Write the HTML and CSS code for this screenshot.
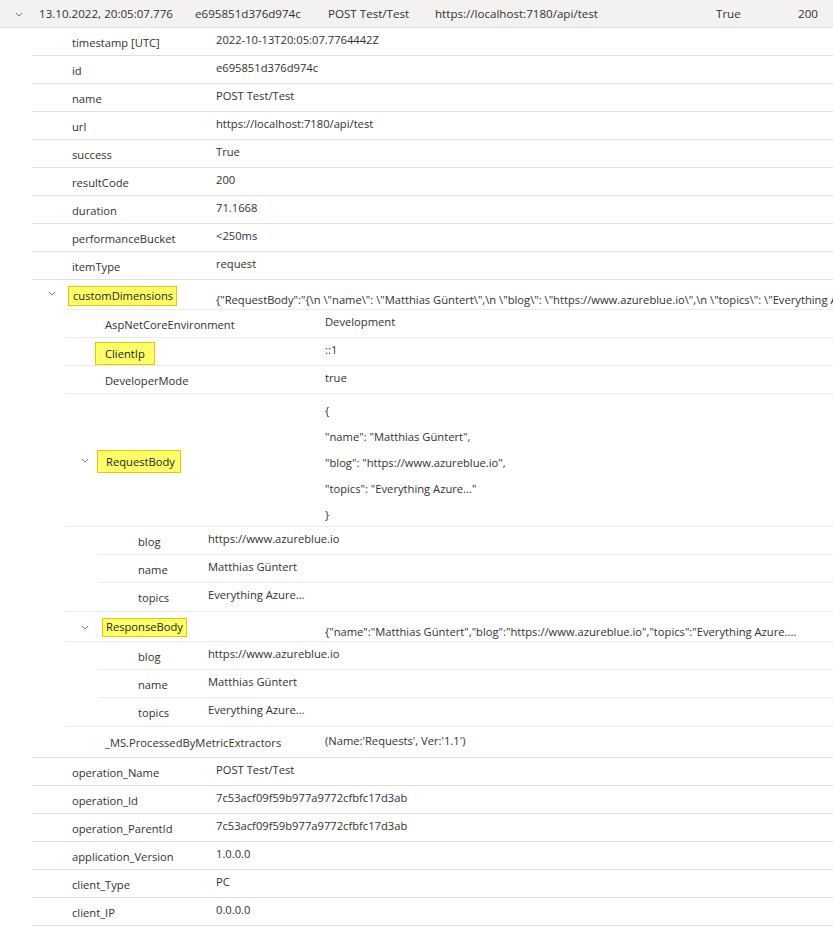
FILE: index.html
```html
<!DOCTYPE html>
<html lang="en">
<head>
<meta charset="utf-8">
<title>Request details</title>
<link rel="stylesheet" href="styles.css">
</head>
<body>
<div class="page">
  <div class="head">
    <div class="head-chev"><svg class="chev" viewBox="0 0 10 6"><path d="M1 1 L5 5 L9 1"/></svg></div>
    <div class="hc hc1">13.10.2022, 20:05:07.776</div>
    <div class="hc hc2">e695851d376d974c</div>
    <div class="hc hc3">POST Test/Test</div>
    <div class="hc hc4">https://localhost:7180/api/test</div>
    <div class="hc hc5">True</div>
    <div class="hc hc6">200</div>
  </div>

  <div class="l1">
    <div class="row"><div class="key">timestamp [UTC]</div><div class="val">2022-10-13T20:05:07.7764442Z</div></div>
    <div class="row"><div class="key">id</div><div class="val">e695851d376d974c</div></div>
    <div class="row"><div class="key">name</div><div class="val">POST Test/Test</div></div>
    <div class="row"><div class="key">url</div><div class="val">https://localhost:7180/api/test</div></div>
    <div class="row"><div class="key">success</div><div class="val">True</div></div>
    <div class="row"><div class="key">resultCode</div><div class="val">200</div></div>
    <div class="row"><div class="key">duration</div><div class="val">71.1668</div></div>
    <div class="row"><div class="key">performanceBucket</div><div class="val">&lt;250ms</div></div>
    <div class="row"><div class="key">itemType</div><div class="val">request</div></div>

    <div class="group">
      <div class="row exp exp-l1">
        <div class="key xkey">
          <span class="xchev"><svg class="chev" viewBox="0 0 10 6"><path d="M1 1 L5 5 L9 1"/></svg></span>
          <span class="hl hl-cd">customDimensions</span>
        </div>
        <div class="val xval clip">{"RequestBody":"{\n \"name\": \"Matthias Güntert\",\n \"blog\": \"https://www.azureblue.io\",\n \"topics\": \"Everything Azure...\"\n}","ResponseBody":"{\"name\":\"Matthias Güntert\"}"}</div>
      </div>

      <div class="l2">
        <div class="row"><div class="key">AspNetCoreEnvironment</div><div class="val">Development</div></div>
        <div class="row"><div class="key"><span class="hl hl-ip">ClientIp</span></div><div class="val">::1</div></div>
        <div class="row"><div class="key">DeveloperMode</div><div class="val">true</div></div>

        <div class="group">
          <div class="row exp req">
            <div class="key xkey xkey-mid">
              <span class="xchev"><svg class="chev" viewBox="0 0 10 6"><path d="M1 1 L5 5 L9 1"/></svg></span>
              <span class="hl hl-req">RequestBody</span>
            </div>
            <div class="val lines">
              <div>{</div>
              <div>"name": "Matthias Güntert",</div>
              <div>"blog": "https://www.azureblue.io",</div>
              <div>"topics": "Everything Azure..."</div>
              <div>}</div>
            </div>
          </div>
          <div class="l3">
            <div class="row"><div class="key">blog</div><div class="val">https://www.azureblue.io</div></div>
            <div class="row"><div class="key">name</div><div class="val">Matthias Güntert</div></div>
            <div class="row"><div class="key">topics</div><div class="val">Everything Azure...</div></div>
          </div>
        </div>

        <div class="group">
          <div class="row exp res">
            <div class="key xkey">
              <span class="xchev"><svg class="chev" viewBox="0 0 10 6"><path d="M1 1 L5 5 L9 1"/></svg></span>
              <span class="hl hl-res">ResponseBody</span>
            </div>
            <div class="val xval">{"name":"Matthias Güntert","blog":"https://www.azureblue.io","topics":"Everything Azure....</div>
          </div>
          <div class="l3">
            <div class="row"><div class="key">blog</div><div class="val">https://www.azureblue.io</div></div>
            <div class="row"><div class="key">name</div><div class="val">Matthias Güntert</div></div>
            <div class="row"><div class="key">topics</div><div class="val">Everything Azure...</div></div>
          </div>
        </div>

        <div class="row ms"><div class="key">_MS.ProcessedByMetricExtractors</div><div class="val">(Name:'Requests', Ver:'1.1')</div></div>
      </div>
    </div>

    <div class="row"><div class="key">operation_Name</div><div class="val">POST Test/Test</div></div>
    <div class="row"><div class="key">operation_Id</div><div class="val">7c53acf09f59b977a9772cfbfc17d3ab</div></div>
    <div class="row"><div class="key">operation_ParentId</div><div class="val">7c53acf09f59b977a9772cfbfc17d3ab</div></div>
    <div class="row"><div class="key">application_Version</div><div class="val">1.0.0.0</div></div>
    <div class="row"><div class="key">client_Type</div><div class="val">PC</div></div>
    <div class="row"><div class="key">client_IP</div><div class="val">0.0.0.0</div></div>
  </div>
</div>
</body>
</html>
```

FILE: styles.css
```css
html, body {
  margin: 0;
  padding: 0;
  background: #ffffff;
}
body {
  font-family: "Open Sans", "Noto Sans", sans-serif;
  font-size: 11.2px;
  line-height: 16px;
  color: #323130;
  overflow: hidden;
}
.page {
  width: 833px;
  overflow: hidden;
}

/* header */
.head {
  display: flex;
  align-items: center;
  height: 28px;
  box-sizing: border-box;
  background: #f3f2f1;
  border-bottom: 1px solid #e1dfdd;
  font-size: 11.6px;
  padding-top: 1px;
}
.head-chev {
  width: 39px;
  padding-left: 15px;
  box-sizing: border-box;
  display: flex;
  align-items: center;
}
.hc { white-space: nowrap; }
.hc1 { width: 156px; }
.hc2 { width: 133px; }
.hc3 { width: 107px; }
.hc4 { width: 281px; }
.hc5 { width: 82px; }

.chev {
  width: 8px;
  height: 5px;
  display: block;
  fill: none;
  stroke: #605e5c;
  stroke-width: 1.1;
}

/* generic rows */
.row {
  display: flex;
  align-items: flex-start;
  height: 28px;
  box-sizing: border-box;
  border-bottom: 1px solid #e1dfdd;
  white-space: nowrap;
}
.key {
  flex: none;
  box-sizing: border-box;
  padding-top: 7px;
  padding-left: 40px;
}
.val {
  padding-top: 4px;
  white-space: nowrap;
}
.clip {
  min-width: 0;
  overflow: hidden;
}

/* level 1 */
.l1 { margin-left: 32px; }
.l1 > .row > .key,
.l1 > .group > .row > .key { width: 184px; }

/* level 2 */
.l2 { margin-left: 33px; }
.l2 .row { border-bottom-color: #edebe9; }
.l2 > .row > .key,
.l2 > .group > .row > .key { width: 260px; }

/* level 3 */
.l3 { margin-left: 33px; }
.l3 > .row > .key { width: 110px; }

.group > .l2 > .row:last-child,
.group > .l3 > .row:last-child { border-bottom: none; }
.l1 > .group { border-bottom: 1px solid #e1dfdd; }
.l2 > .group { border-bottom: 1px solid #edebe9; }

/* expandable headers */
.exp { height: 30px; }
.exp-l1 { border-bottom: none; height: 29px; }
.exp-l1 + .l2 { border-top: 1px solid #edebe9; }
.xkey {
  display: flex;
  align-items: flex-start;
  padding-left: 0;
  padding-top: 6px;
}
.xchev {
  flex: none;
  width: 36px;
  padding-left: 16px;
  padding-top: 5px;
  box-sizing: border-box;
}
.l2 .xchev { width: 32px; padding-top: 7px; }
.xval { padding-top: 12px; }

.req { height: 133px; align-items: stretch; }
.xkey-mid { align-items: center; padding-top: 2px; }
.xkey-mid .xchev { padding-top: 0; padding-bottom: 2px; }
.lines { padding-top: 4px; line-height: 26px; }

.ms { height: 30px; }
.ms .key { padding-top: 8px; }
.ms .val { padding-top: 6px; }

/* highlights */
.hl {
  display: inline-block;
  background: #ffff66;
  border: 1px solid #f0c20c;
  box-sizing: border-box;
  line-height: 16px;
  color: #201f1e;
}
.hl-cd { height: 20px; padding: 1px 3px 0 4px; }
.hl-ip { height: 23px; padding: 3px 9px 0 9px; margin-left: -10px; margin-top: -3px; }
.hl-req { height: 23px; padding: 3px 5px 0 8px; }
.hl-res { height: 19px; padding: 0 3px 0 3px; margin-left: 5px; }
```
